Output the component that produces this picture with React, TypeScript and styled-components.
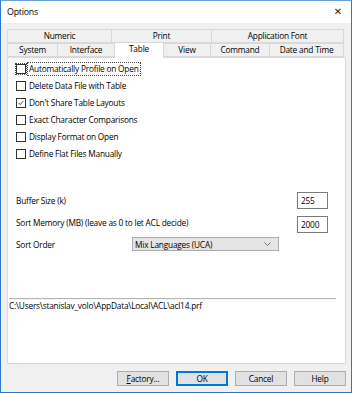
import styled, { createGlobalStyle } from "styled-components";

const GlobalStyle = createGlobalStyle`
  html, body {
    margin: 0;
    padding: 0;
    background: #ffffff;
  }
  body {
    font-family: "Open Sans", "Noto Sans", "Liberation Sans", sans-serif;
    font-size: 8.3px;
    letter-spacing: -0.2px;
    color: #000;
  }
`;

const Window = styled.div`
  box-sizing: border-box;
  width: 352px;
  height: 393px;
  border: 1px solid #2b78cd;
  border-top-color: #6a9fd8;
  display: flex;
  flex-direction: column;
  background: #f0f0f0;
`;

const TitleBar = styled.div`
  height: 22px;
  background: #ffffff;
  display: flex;
  align-items: center;
  justify-content: space-between;
  padding: 0 9px 0 6px;
  font-size: 8.8px;
`;

const Close = styled.span`
  font-size: 10px;
  line-height: 1;
  color: #222;
  font-family: "DejaVu Sans", sans-serif;
`;

const Body = styled.div`
  flex: 1;
  display: flex;
  flex-direction: column;
  padding: 6px 5px 5px 6px;
`;

const TabRows = styled.div`
  display: flex;
  flex-direction: column;
`;

const TabRow = styled.div`
  display: flex;
  height: 14px;
  align-items: flex-end;
`;

const Tab = styled.div<{ $w: number; $active?: boolean }>`
  box-sizing: border-box;
  width: ${(p) => p.$w}px;
  height: ${(p) => (p.$active ? 16 : 14)}px;
  margin-bottom: ${(p) => (p.$active ? -1 : 0)}px;
  position: relative;
  z-index: ${(p) => (p.$active ? 2 : 1)};
  background: ${(p) => (p.$active ? "#ffffff" : "#f0f0f0")};
  border: 1px solid #d9d9d9;
  border-bottom: ${(p) => (p.$active ? "none" : "1px solid #d9d9d9")};
  margin-left: -1px;
  display: flex;
  align-items: center;
  justify-content: center;
  line-height: 1;
  padding-bottom: ${(p) => (p.$active ? 3 : 0)}px;
  &:first-child {
    margin-left: 0;
  }
`;

const Panel = styled.div`
  box-sizing: border-box;
  flex: 0 0 307px;
  background: #ffffff;
  border: 1px solid #d9d9d9;
  display: flex;
  flex-direction: column;
  padding: 5px 9px 0 8px;
`;

const CheckList = styled.div`
  display: flex;
  flex-direction: column;
  gap: 5px;
`;

const CheckRow = styled.label<{ $focus?: boolean }>`
  display: flex;
  align-items: center;
  height: 12px;
  gap: 2px;
  span {
    padding: 0 1px;
    outline: ${(p) => (p.$focus ? "1px dotted #444" : "none")};
    line-height: 12px;
  }
`;

const Box = styled.span`
  box-sizing: border-box;
  width: 10px;
  height: 10px;
  border: 1px solid #333;
  background: #fff;
  display: flex;
  align-items: center;
  justify-content: center;
  flex: none;
`;

const Fields = styled.div`
  margin-top: 29px;
  display: flex;
  flex-direction: column;
`;

const FieldRow = styled.div<{ $h: number }>`
  display: flex;
  align-items: center;
  height: ${(p) => p.$h}px;
`;

const Label = styled.div`
  flex: 1;
`;

const NumInput = styled.div<{ $drop?: number }>`
  box-sizing: border-box;
  width: 31px;
  height: 17px;
  border: 1px solid #7a7a7a;
  display: flex;
  align-items: center;
  padding-left: 3px;
  margin-right: 8px;
  margin-top: ${(p) => p.$drop ?? 0}px;
`;

const Select = styled.div`
  box-sizing: border-box;
  width: 147px;
  height: 14px;
  border: 1px solid #adadad;
  background: #e5e5e5;
  display: flex;
  align-items: center;
  justify-content: space-between;
  padding: 0 7px 0 2px;
`;

const SelectLabel = styled.div`
  width: 116px;
`;

const Separator = styled.div`
  margin-top: 43px;
  height: 1px;
  background: #b4b4b4;
  margin-left: -7px;
  border-bottom: 1px solid #f6f6f6;
`;

const PathText = styled.div`
  margin-left: -7px;
  margin-top: 0;
`;

const Buttons = styled.div`
  display: flex;
  justify-content: flex-end;
  gap: 7px;
  margin-top: 7px;
`;

const Button = styled.div<{ $default?: boolean }>`
  box-sizing: border-box;
  width: 52px;
  height: 15px;
  border: 1px solid ${(p) => (p.$default ? "#0078d7" : "#adadad")};
  box-shadow: ${(p) => (p.$default ? "inset 0 0 0 1px #0078d7" : "none")};
  background: #e1e1e1;
  display: flex;
  align-items: center;
  justify-content: center;
  u {
    text-decoration: underline;
  }
`;

const checks = [
  { text: "Automatically Profile on Open", checked: false, focus: true },
  { text: "Delete Data File with Table", checked: false },
  { text: "Don't Share Table Layouts", checked: true },
  { text: "Exact Character Comparisons", checked: false },
  { text: "Display Format on Open", checked: false },
  { text: "Define Flat Files Manually", checked: false },
];

function Check({ checked }: { checked: boolean }) {
  return (
    <Box>
      {checked && (
        <svg width="8" height="8" viewBox="0 0 8 8">
          <path d="M1 4 L3 6.2 L7 1.3" fill="none" stroke="#222" strokeWidth="1" />
        </svg>
      )}
    </Box>
  );
}

export default function App() {
  return (
    <>
      <GlobalStyle />
      <Window>
        <TitleBar>
          <span>Options</span>
          <Close>✕</Close>
        </TitleBar>
        <Body>
          <TabRows>
            <TabRow>
              <Tab $w={105}>Numeric</Tab>
              <Tab $w={101}>Print</Tab>
              <Tab $w={133}>Application Font</Tab>
            </TabRow>
            <TabRow>
              <Tab $w={51}>System</Tab>
              <Tab $w={58}>Interface</Tab>
              <Tab $w={50} $active>
                Table
              </Tab>
              <Tab $w={48}>View</Tab>
              <Tab $w={60}>Command</Tab>
              <Tab $w={75}>Date and Time</Tab>
            </TabRow>
          </TabRows>
          <Panel>
            <CheckList>
              {checks.map((c) => (
                <CheckRow key={c.text} $focus={c.focus}>
                  <Check checked={c.checked} />
                  <span>{c.text}</span>
                </CheckRow>
              ))}
            </CheckList>
            <Fields>
              <FieldRow $h={22}>
                <Label>Buffer Size (k)</Label>
                <NumInput>255</NumInput>
              </FieldRow>
              <FieldRow $h={22}>
                <Label>Sort Memory (MB) (leave as 0 to let ACL decide)</Label>
                <NumInput $drop={5}>2000</NumInput>
              </FieldRow>
              <FieldRow $h={22}>
                <SelectLabel>Sort Order</SelectLabel>
                <Select>
                  <span>Mix Languages (UCA)</span>
                  <svg width="7" height="4" viewBox="0 0 7 4">
                    <path d="M0.5 0.5 L3.5 3.5 L6.5 0.5" fill="none" stroke="#666" strokeWidth="0.9" />
                  </svg>
                </Select>
              </FieldRow>
            </Fields>
            <Separator />
            <PathText>C:\Users\stanislav_volo\AppData\Local\ACL\acl14.prf</PathText>
          </Panel>
          <Buttons>
            <Button>
              <span>
                <u>F</u>actory...
              </span>
            </Button>
            <Button $default>OK</Button>
            <Button>Cancel</Button>
            <Button>Help</Button>
          </Buttons>
        </Body>
      </Window>
    </>
  );
}
